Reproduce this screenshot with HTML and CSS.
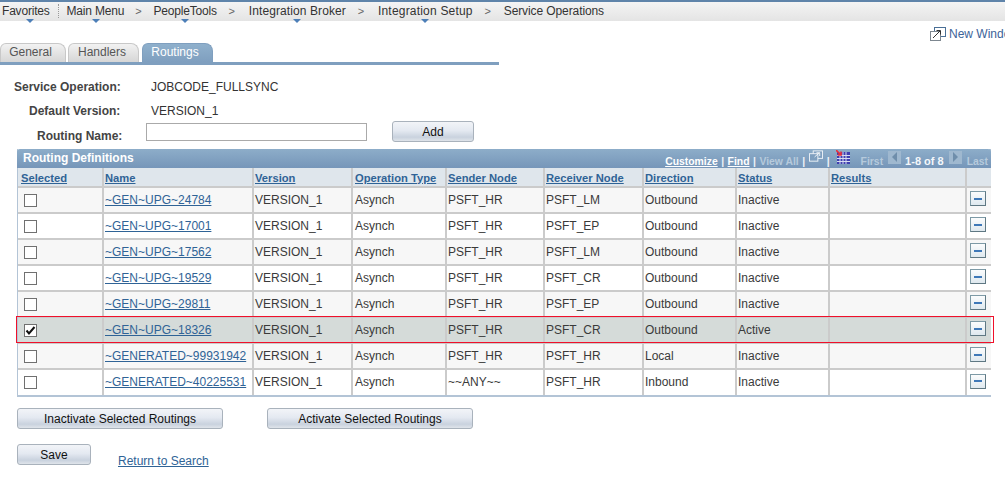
FILE: index.html
```html
<!DOCTYPE html>
<html lang="en">
<head>
    <meta charset="UTF-8">
    <title>Service Operations</title>
    <link rel="stylesheet" href="styles.css">
</head>
<body>
    <nav class="breadcrumbs">
        <span class="crumb crumb-first">Favorites</span>
        <span class="crumb crumb-main">Main Menu</span>
        <span class="sep">&gt;</span>
        <span class="crumb crumb-tools">PeopleTools</span>
        <span class="sep">&gt;</span>
        <span class="crumb crumb-broker">Integration Broker</span>
        <span class="sep">&gt;</span>
        <span class="crumb crumb-setup">Integration Setup</span>
        <span class="sep">&gt;</span>
        <span class="crumb-last">Service Operations</span>
    </nav>

    <div class="new-window">
        <svg width="16" height="14" viewBox="0 0 16 14">
            <rect x="4.5" y="0.5" width="11" height="9" fill="#fff" stroke="#4a6f96"/>
            <rect x="0.5" y="4.5" width="10" height="9" fill="#fff" stroke="#7d8790"/>
            <path d="M3 11 L10 4 M6.5 3.5 H10.5 V7.5" fill="none" stroke="#333" stroke-width="1"/>
        </svg>
        <a href="#">New Window</a>
    </div>

    <div class="tabs">
        <span class="tab tab-general">General</span>
        <span class="tab tab-handlers">Handlers</span>
        <span class="tab tab-active">Routings</span>
    </div>

    <div class="form-fields">
        <label class="label-service">Service Operation:</label>
        <span class="value">JOBCODE_FULLSYNC</span>
        <label class="label-version">Default Version:</label>
        <span class="value">VERSION_1</span>
        <label class="label-routing">Routing Name:</label>
        <div class="name-row">
            <input class="name-input" type="text">
            <button class="btn btn-add">Add</button>
        </div>
    </div>

    <div class="grid">
        <div class="grid-title">
            <span class="grid-name">Routing Definitions</span>
            <div class="grid-tools">
                <a href="#">Customize</a><i>|</i><a href="#">Find</a><i>|</i><span class="off">View All</span><i>|</i>
                <svg class="tool-zoom" width="14" height="13" viewBox="0 0 15 13">
                    <rect x="4.5" y="0.5" width="10" height="8" fill="#7f9fbf" stroke="#eef3f8"/>
                    <rect x="0.5" y="3.5" width="9" height="8" fill="#7f9fbf" stroke="#eef3f8"/>
                    <path d="M6 7 L11 2.5 M8 2.5 H11.5 V6" fill="none" stroke="#f4f7fa"/>
                </svg>
                <i class="tight">|</i>
                <svg class="tool-download" width="14" height="14" viewBox="0 0 14 14">
                    <rect x="1" y="2" width="13" height="12" fill="#3f3fb0"/>
                    <path d="M1 5.5H14M1 8.5H14M1 11.5H14M4 2V14M7 2V14M10 2V14" stroke="#d8dcf0"/>
                    <path d="M0 0 L5 5 M5 1.5 V5 H1.5" fill="none" stroke="#e8303a" stroke-width="1.6"/>
                </svg>
                <span class="off first">First</span>
                <span class="pager"><b class="arrow-left"></b></span>
                <strong>1-8 of 8</strong>
                <span class="pager pager-next"><b class="arrow-right"></b></span>
                <span class="off">Last</span>
            </div>
        </div>
        <table class="routings">
            <colgroup>
                <col class="c-sel"><col class="c-name"><col class="c-ver"><col class="c-type">
                <col class="c-send"><col class="c-recv"><col class="c-dir"><col class="c-stat">
                <col class="c-res"><col class="c-del">
            </colgroup>
            <thead>
                <tr>
                    <th><a href="#">Selected</a></th><th><a href="#">Name</a></th><th><a href="#">Version</a></th>
                    <th><a href="#">Operation Type</a></th><th><a href="#">Sender Node</a></th><th><a href="#">Receiver Node</a></th>
                    <th><a href="#">Direction</a></th><th><a href="#">Status</a></th><th><a href="#">Results</a></th><th></th>
                </tr>
            </thead>
            <tbody>
                <tr class="odd"><td><span class="check"></span></td><td><a href="#">~GEN~UPG~24784</a></td><td>VERSION_1</td><td>Asynch</td><td>PSFT_HR</td><td>PSFT_LM</td><td>Outbound</td><td>Inactive</td><td></td><td><span class="minus"></span></td></tr>
                <tr><td><span class="check"></span></td><td><a href="#">~GEN~UPG~17001</a></td><td>VERSION_1</td><td>Asynch</td><td>PSFT_HR</td><td>PSFT_EP</td><td>Outbound</td><td>Inactive</td><td></td><td><span class="minus"></span></td></tr>
                <tr class="odd"><td><span class="check"></span></td><td><a href="#">~GEN~UPG~17562</a></td><td>VERSION_1</td><td>Asynch</td><td>PSFT_HR</td><td>PSFT_LM</td><td>Outbound</td><td>Inactive</td><td></td><td><span class="minus"></span></td></tr>
                <tr><td><span class="check"></span></td><td><a href="#">~GEN~UPG~19529</a></td><td>VERSION_1</td><td>Asynch</td><td>PSFT_HR</td><td>PSFT_CR</td><td>Outbound</td><td>Inactive</td><td></td><td><span class="minus"></span></td></tr>
                <tr class="odd"><td><span class="check"></span></td><td><a href="#">~GEN~UPG~29811</a></td><td>VERSION_1</td><td>Asynch</td><td>PSFT_HR</td><td>PSFT_EP</td><td>Outbound</td><td>Inactive</td><td></td><td><span class="minus"></span></td></tr>
                <tr class="picked"><td><span class="check checked"><svg width="11" height="11" viewBox="0 0 11 11"><path d="M1.5 5.5 L4 8.5 L9.5 2" fill="none" stroke="#111" stroke-width="2"/></svg></span></td><td><a href="#">~GEN~UPG~18326</a></td><td>VERSION_1</td><td>Asynch</td><td>PSFT_HR</td><td>PSFT_CR</td><td>Outbound</td><td>Active</td><td></td><td><span class="minus"></span></td></tr>
                <tr class="odd"><td><span class="check"></span></td><td><a href="#">~GENERATED~99931942</a></td><td>VERSION_1</td><td>Asynch</td><td>PSFT_HR</td><td>PSFT_HR</td><td>Local</td><td>Inactive</td><td></td><td><span class="minus"></span></td></tr>
                <tr><td><span class="check"></span></td><td><a href="#">~GENERATED~40225531</a></td><td>VERSION_1</td><td>Asynch</td><td>~~ANY~~</td><td>PSFT_HR</td><td>Inbound</td><td>Inactive</td><td></td><td><span class="minus"></span></td></tr>
            </tbody>
        </table>
        <div class="highlight"></div>
    </div>

    <div class="actions">
        <button class="btn btn-wide">Inactivate Selected Routings</button>
        <button class="btn btn-wide">Activate Selected Routings</button>
    </div>

    <div class="footer">
        <button class="btn btn-save">Save</button>
        <a class="return" href="#">Return to Search</a>
    </div>
</body>
</html>
```

FILE: styles.css
```css
html, body {
    height: 100%;
    overflow: hidden;
}
body {
    margin: 0;
    background: #fff;
    font-family: "Liberation Sans", Arial, sans-serif;
    font-size: 12px;
    color: #333;
}
a {
    color: #2f6396;
}

/* top breadcrumb bar */
.breadcrumbs {
    display: flex;
    align-items: center;
    box-sizing: border-box;
    height: 21px;
    padding-bottom: 2px;
    border-top: 2px solid #5f84aa;
    background: linear-gradient(#f4f4f4, #e4e4e4);
    white-space: nowrap;
    color: #333;
}
.crumb {
    position: relative;
    flex: none;
}
.crumb::after {
    content: "";
    position: absolute;
    left: 50%;
    bottom: -5px;
    margin-left: -4px;
    border: 4px solid transparent;
    border-top-color: #4c7fb8;
    border-bottom: 0;
}
.crumb-first {
    margin-left: 2px;
    padding-right: 8px;
    border-right: 1px dotted #999;
    margin-right: 8px;
    letter-spacing: -0.2px;
}
.sep {
    flex: none;
    width: 30px;
    text-align: center;
    color: #666;
    font-size: 11px;
}
.crumb-main { width: 58px; margin-right: -1px; letter-spacing: -0.2px; }
.crumb-tools { letter-spacing: -0.2px; }
.crumb-broker { margin-left: 2px; letter-spacing: 0.1px; }
.crumb-setup { margin-left: 2px; letter-spacing: 0.2px; }
.crumb-last { margin-left: 1px; letter-spacing: -0.1px; }

.new-window {
    display: flex;
    align-items: center;
    gap: 3px;
    box-sizing: border-box;
    height: 22px;
    padding: 3px 0 0 930px;
    white-space: nowrap;
}
.new-window svg, .new-window a {
    flex: none;
}
.new-window a {
    text-decoration: none;
    color: #3c6399;
}

/* tabs */
.tabs {
    display: flex;
    align-items: flex-end;
    width: 499px;
    height: 19px;
    border-bottom: 3px solid #7f9fbf;
}
.tab {
    box-sizing: border-box;
    height: 19px;
    line-height: 17px;
    padding-right: 5px;
    text-align: center;
    color: #555;
    background: linear-gradient(#f2f2f2, #d6d6d6);
    border: 1px solid #c8c8c8;
    border-bottom: 0;
    border-radius: 6px 8px 0 0;
}
.tab-general { width: 66px; margin-right: 2px; }
.tab-handlers { width: 71px; margin-right: 3px; padding-right: 3px; }
.tab-active {
    width: 71px;
    padding-right: 5px;
    border-color: #7f9fbf;
    color: #fff;
    background: linear-gradient(#8fb0cc, #7f9fbf);
}

/* field block */
.form-fields {
    display: grid;
    grid-template-columns: 146px 1fr;
    grid-auto-rows: 24px;
    align-items: center;
    height: 84px;
    padding-top: 10px;
    box-sizing: border-box;
}
.form-fields label {
    font-weight: bold;
    color: #444;
}
.label-service { padding-left: 14px; }
.label-version { padding-left: 29px; }
.label-routing { padding: 1px 0 0 37px; }
.value {
    padding-left: 5px;
}
.name-row {
    display: flex;
    align-items: flex-start;
    align-self: start;
    gap: 25px;
}
.name-input {
    box-sizing: border-box;
    width: 221px;
    height: 18px;
    padding: 0;
    border: 1px solid #aaa;
    background: #fff;
}

/* buttons */
.btn {
    box-sizing: border-box;
    height: 21px;
    padding: 0;
    font: 12px "Liberation Sans", Arial, sans-serif;
    color: #111;
    border: 1px solid #a9b2bc;
    border-radius: 3px;
    background: linear-gradient(#f2f4f8 0%, #e4e9f1 45%, #c9d2de 80%, #dfe4ea 100%);
}
.btn-add { width: 82px; margin-top: -2px; }
.btn-wide { width: 206px; }
.btn-save { width: 74px; }

/* grid */
.grid {
    position: relative;
    box-sizing: border-box;
    width: 974px;
    margin-left: 17px;
    border: 1px solid #b3c4d6;
    border-top: 0;
    border-bottom-width: 2px;
    border-right-width: 2px;
}
.grid-title {
    display: flex;
    justify-content: space-between;
    align-items: center;
    height: 19px;
    margin: 0 -2px 0 -1px;
    padding: 0 3px 0 6px;
    color: #fff;
    border-radius: 3px 3px 0 0;
    background: linear-gradient(#8dadc9, #7696b9);
}
.grid-name {
    padding-bottom: 2px;
    font-weight: bold;
}
.grid-tools {
    display: flex;
    align-items: center;
    font-size: 10.4px;
    padding-top: 5px;
    font-weight: bold;
}
.grid-tools a {
    color: #fff;
}
.grid-tools i {
    font-style: normal;
    margin: 0 3.5px;
    color: #eef3f8;
}
.grid-tools i.tight {
    margin: 0 6px 0 4px;
}
.grid-tools .off {
    color: #b6cadc;
}
.grid-tools .first {
    margin-left: 11px;
}
.grid-tools strong {
    font-size: 11px;
    color: #f4f7fa;
}
.tool-zoom, .tool-download {
    margin-top: -9px;
}
.pager {
    display: flex;
    align-items: center;
    justify-content: center;
    width: 13px;
    height: 13px;
    margin: -8px 4px 0 5px;
    background: #9fb8cf;
}
.pager-next {
    margin-right: 5px;
}
.arrow-left, .arrow-right {
    border: 5px solid transparent;
    border-left: 0;
    border-right: 5px solid #6f8eab;
}
.arrow-right {
    border-right: 0;
    border-left: 5px solid #6f8eab;
}

.routings {
    width: 973px;
    table-layout: fixed;
    border-collapse: collapse;
}
.c-sel { width: 85px; }
.c-name { width: 150px; }
.c-ver { width: 99px; }
.c-type { width: 94px; }
.c-send { width: 98px; }
.c-recv { width: 99px; }
.c-dir { width: 93px; }
.c-stat { width: 93px; }
.c-res { width: 137px; }
.c-del { width: 25px; }
.routings th, .routings td {
    box-sizing: border-box;
    padding: 0 0 1px 1px;
    border-right: 2px solid #cbcbcb;
    border-bottom: 2px solid #cbcbcb;
    text-align: left;
    white-space: nowrap;
}
.routings th:first-child, .routings td:first-child {
    padding-left: 3px;
}
.routings th:nth-child(4), .routings td:nth-child(4) {
    padding-left: 2px;
}
.routings th:last-child, .routings td:last-child {
    border-right: 0;
}
.routings tbody tr:last-child td {
    border-bottom: 0;
}
.routings th {
    height: 19px;
    padding: 1px 0 0 1px;
    background: #dfe6ec;
    font-size: 11.2px;
    font-weight: bold;
}
.routings td {
    height: 26px;
    background: #fff;
    color: #3a3a3a;
}
.routings .odd td {
    background: #f7f7f7;
}
.routings .picked td {
    background: #d5dbd9;
}
.check {
    display: block;
    box-sizing: border-box;
    width: 13px;
    height: 13px;
    margin: 1px 0 0 3px;
    border: 1px solid #707070;
    background: #fff;
}
.check svg {
    display: block;
}
.minus {
    display: flex;
    align-items: center;
    justify-content: center;
    box-sizing: border-box;
    width: 16px;
    height: 15px;
    margin: -2px 0 0 2px;
    border: 1px solid #7d9aa6;
    border-right-color: #5f7883;
    border-bottom-color: #5f7883;
    background: linear-gradient(#fbfcfd, #dfe9ef);
}
.minus::before {
    content: "";
    width: 8px;
    height: 2px;
    background: #3e78b8;
}
.highlight {
    position: absolute;
    z-index: 1;
    left: -2px;
    top: 167px;
    width: 978px;
    height: 27px;
    box-sizing: border-box;
    border: 1px solid #f0102a;
}

/* bottom buttons */
.actions {
    display: flex;
    gap: 44px;
    margin: 11px 0 0 17px;
}
.footer {
    display: flex;
    align-items: flex-end;
    gap: 27px;
    margin: 15px 0 0 17px;
}
.return {
    margin-bottom: -3px;
}
```
